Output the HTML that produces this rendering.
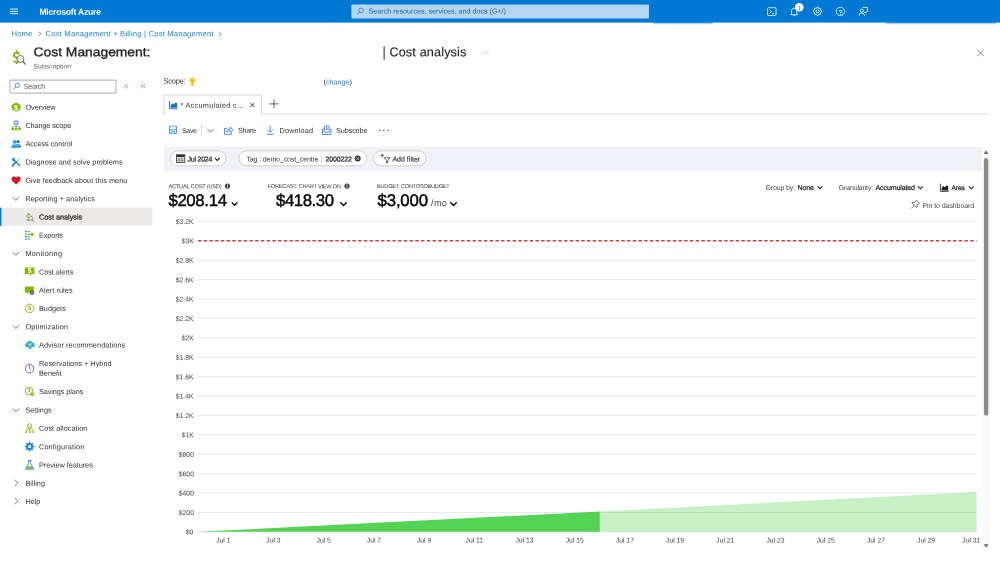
<!DOCTYPE html>
<html lang="en"><head><meta charset="utf-8"><title>Cost analysis - Microsoft Azure</title>
<style>
html,body{margin:0;padding:0;background:#fff;}
body{width:1000px;height:562px;position:relative;overflow:hidden;font-family:"Liberation Sans", sans-serif;}
.t{position:absolute;white-space:nowrap;line-height:1;margin:0;padding:0;}
svg{display:block;overflow:visible}
#app{position:absolute;left:0;top:0;width:1000px;height:562px;will-change:transform;}
</style></head><body><div id="app">
<svg style="position:absolute;left:0;top:0" width="1000" height="562" viewBox="0 0 1000 562">
<rect x="0.00" y="0.00" width="1000.00" height="22.60" fill="#0078d4"/>
</svg>
<div style="position:absolute;left:653px;top:16px;width:60px;height:7px;background:#0078d4;filter:blur(1.3px);"></div>
<div style="position:absolute;left:886px;top:16px;width:110px;height:7px;background:#0078d4;filter:blur(1.3px);"></div>
<svg style="position:absolute;left:0;top:0" width="1000" height="562" viewBox="0 0 1000 562">
<rect x="10.00" y="8.60" width="8.00" height="0.90" fill="#fff"/>
<rect x="10.00" y="10.90" width="8.00" height="0.90" fill="#fff"/>
<rect x="10.00" y="13.20" width="8.00" height="0.90" fill="#fff"/>
</svg>
<span class="t" id="t6" style="left:39px;top:7px;font-size:8.6px;color:#fff;transform:translate(0.40px,0.73px) rotate(0.03deg);font-weight:700;letter-spacing:-0.216px;">Microsoft Azure</span>
<svg style="position:absolute;left:0;top:0" width="1000" height="562" viewBox="0 0 1000 562">
<rect x="351.40" y="4.40" width="297.60" height="14.20" rx="1.0" fill="#b3d6f2"/>
<g transform="translate(356.20 7.40)"><circle cx="4.9" cy="3" r="2.3" fill="none" stroke="#3a6fa6" stroke-width="0.75"/><path d="M3.3 4.7L0.7 7.3" stroke="#3a6fa6" stroke-width="0.75" fill="none"/></g>
</svg>
<span class="t" id="t9" style="left:368px;top:7px;font-size:7.2px;color:#2a609a;transform:translate(0.60px,0.47px) rotate(0.03deg);letter-spacing:-0.025px;">Search resources, services, and docs (G+/)</span>
<svg style="position:absolute;left:0;top:0" width="1000" height="562" viewBox="0 0 1000 562">
<g transform="translate(767.00 6.80)"><rect x="0.6" y="0.9" width="8.4" height="7.8" rx="0.8" fill="none" stroke="#fff" stroke-width="0.8"/><path d="M2.5 3.2L4.6 4.9L2.5 6.6" fill="none" stroke="#fff" stroke-width="0.8"/><path d="M5 6.9H7.2" fill="none" stroke="#fff" stroke-width="0.8"/></g>
<g transform="translate(789.50 6.60)"><path d="M2 7.2V4.2a2.7 2.7 0 0 1 5.4 0V7.2l0.8 0.9H1.2Z" fill="none" stroke="#fff" stroke-width="0.8"/><path d="M3.8 8.4a1 1 0 0 0 1.9 0" fill="none" stroke="#fff" stroke-width="0.8"/></g>
<circle cx="799.3" cy="7.3" r="4.3" fill="#fff"/>
</svg>
<span class="t" id="t13" style="left:699px;width:200px;text-align:center;top:5px;font-size:5.6px;color:#5aa6e4;transform:translate(0.30px,0.95px) rotate(0.03deg);font-weight:700;">1</span>
<svg style="position:absolute;left:0;top:0" width="1000" height="562" viewBox="0 0 1000 562">
<g transform="translate(812.70 6.60)"><path d="M9.08,4.38L9.08,5.22L7.96,5.76L7.71,6.36L8.12,7.53L7.53,8.12L6.36,7.71L5.76,7.96L5.22,9.08L4.38,9.08L3.84,7.96L3.24,7.71L2.07,8.12L1.48,7.53L1.89,6.36L1.64,5.76L0.52,5.22L0.52,4.38L1.64,3.84L1.89,3.24L1.48,2.07L2.07,1.48L3.24,1.89L3.84,1.64L4.38,0.52L5.22,0.52L5.76,1.64L6.36,1.89L7.53,1.48L8.12,2.07L7.71,3.24L7.96,3.84Z" fill="none" stroke="#fff" stroke-width="0.8" stroke-linejoin="round"/><circle cx="4.8" cy="4.8" r="1.5" fill="none" stroke="#fff" stroke-width="0.8"/></g>
<g transform="translate(835.60 6.60)"><circle cx="4.8" cy="4.8" r="4.2" fill="none" stroke="#fff" stroke-width="0.8"/></g>
</svg>
<span class="t" id="t16" style="left:740px;width:200px;text-align:center;top:9px;font-size:6.6px;color:#fff;transform:translate(0.40px,0.46px) rotate(0.03deg);font-weight:700;">?</span>
<svg style="position:absolute;left:0;top:0" width="1000" height="562" viewBox="0 0 1000 562">
<g transform="translate(858.40 6.60)"><circle cx="3.4" cy="4.2" r="1.6" fill="none" stroke="#fff" stroke-width="0.8"/><path d="M0.6 9.2a2.8 2.8 0 0 1 5.6 0" fill="none" stroke="#fff" stroke-width="0.8"/><path d="M4.2 0.8H9v4.4H7.6L6.4 6.4V5.2" fill="none" stroke="#fff" stroke-width="0.8"/></g>
</svg>
<span class="t" id="t18" style="left:11px;top:30px;font-size:7.7px;color:#1a84d8;transform:translate(0.60px,0.20px) rotate(0.03deg);letter-spacing:0.093px;">Home</span>
<svg style="position:absolute;left:0;top:0" width="1000" height="562" viewBox="0 0 1000 562">
<g transform="translate(38.00 31.30)"><path d="M0.6 0.5L3 2.5L0.6 4.5" fill="none" stroke="#605e5c" stroke-width="0.7"/></g>
</svg>
<span class="t" id="t20" style="left:45px;top:30px;font-size:7.7px;color:#1a84d8;transform:translate(0.60px,0.20px) rotate(0.03deg);letter-spacing:0.162px;">Cost Management + Billing | Cost Management</span>
<svg style="position:absolute;left:0;top:0" width="1000" height="562" viewBox="0 0 1000 562">
<g transform="translate(218.40 31.30)"><path d="M0.6 0.5L3 2.5L0.6 4.5" fill="none" stroke="#605e5c" stroke-width="0.7"/></g>
</svg>
<span class="t" id="t22" style="left:33px;top:46px;font-size:12.7px;color:#252423;transform:translate(0.60px,0.25px) rotate(0.03deg) scaleX(1.0895);transform-origin:0 50%;-webkit-text-stroke:0.34px #252423;">Cost Management:</span>
<span class="t" id="t23" style="left:382px;top:44px;font-size:14.5px;color:#4a4644;transform:translate(0.30px,0.89px) rotate(0.03deg);">|</span>
<span class="t" id="t24" style="left:389px;top:46px;font-size:12.7px;color:#252423;transform:translate(0.40px,0.25px) rotate(0.03deg);letter-spacing:0.128px;-webkit-text-stroke:0.12px #252423;">Cost analysis</span>
<svg style="position:absolute;left:0;top:0" width="1000" height="562" viewBox="0 0 1000 562">
<ellipse cx="482.90" cy="52.80" rx="0.50" ry="0.50" fill="#8a8886"/>
<ellipse cx="485.40" cy="52.80" rx="0.50" ry="0.50" fill="#8a8886"/>
<ellipse cx="487.90" cy="52.80" rx="0.50" ry="0.50" fill="#8a8886"/>
</svg>
<span class="t" id="t28" style="left:33px;top:63px;font-size:6.7px;color:#605e5c;transform:translate(0.60px,0.44px) rotate(0.03deg);letter-spacing:0.053px;">Subscription</span>
<svg style="position:absolute;left:0;top:0" width="1000" height="562" viewBox="0 0 1000 562">
<g transform="translate(977.00 49.50)"><path d="M0.4 0.4L6.6 6.6M6.6 0.4L0.4 6.6" stroke="#605e5c" stroke-width="0.75" fill="none"/></g>
<rect x="9.77" y="80.08" width="106.15" height="13.05" rx="1.23" fill="#fff" stroke="#bdbbb9" stroke-width="1.15"/>
<g transform="translate(12.60 82.60)"><circle cx="4.7" cy="2.8" r="2.2" fill="none" stroke="#2b88d8" stroke-width="0.8"/><path d="M3.1 4.4L0.5 7" stroke="#2b88d8" stroke-width="0.8" fill="none"/></g>
</svg>
<span class="t" id="t32" style="left:23px;top:82px;font-size:7.25px;color:#605e5c;transform:translate(0.70px,0.69px) rotate(0.03deg);letter-spacing:-0.292px;">Search</span>
<svg style="position:absolute;left:0;top:0" width="1000" height="562" viewBox="0 0 1000 562">
<g transform="translate(124.20 84.00)"><circle cx="2" cy="2.6" r="1.5" fill="none" stroke="#8a8886" stroke-width="0.6"/><path d="M2 0.2V1.4" stroke="#8a8886" stroke-width="0.6"/></g>
<g transform="translate(140.60 83.80)"><path d="M2.2 0.3L0.5 2.3L2.2 4.3M4.5 0.3L2.8 2.3L4.5 4.3" fill="none" stroke="#605e5c" stroke-width="0.6"/></g>
<g transform="translate(10.80 49.70) scale(0.7100 0.7100)"><path d="M12.4 6.2C11.4 4.6 9.2 4 7.2 4.6C5.2 5.2 4.2 6.6 4.4 8.2C4.6 10 6.4 10.6 8.4 11.2C10.4 11.8 12 12.6 12 14.6C12 16.4 10.4 17.6 8.2 17.6C6.2 17.6 4.6 16.8 3.8 15.4" fill="none" stroke="#7fba00" stroke-width="2.6"/><path d="M8.2 0.6V3.6M8.2 17.4V20" stroke="#7fba00" stroke-width="2.4"/><circle cx="13.4" cy="13.1" r="5" fill="#f2f6ee" fill-opacity="0.78" stroke="#6a6a6a" stroke-width="1.3"/><path d="M17.2 16.9L20.4 20.4" stroke="#5a5a5a" stroke-width="1.7" stroke-linecap="round"/></g>
<rect x="0.00" y="207.70" width="152.20" height="18.10" fill="#edebe9"/>
<rect x="0.00" y="207.70" width="1.40" height="18.10" fill="#0078d4"/>
</svg>
<span class="t" id="t38" style="left:25px;top:103px;font-size:7.3px;color:#323130;transform:translate(0.40px,0.70px) rotate(0.03deg);letter-spacing:-0.032px;">Overview</span>
<svg style="position:absolute;left:0;top:0" width="1000" height="562" viewBox="0 0 1000 562">
<g transform="translate(11.10 102.10) scale(0.5000 0.5000)"><path d="M10 0.8L18.8 5.6V14.4L10 19.2L1.2 14.4V5.6Z" fill="#7fba00"/><text x="10" y="15.2" font-size="14.5" font-weight="700" text-anchor="middle" fill="#fff" font-family="Liberation Sans, sans-serif">$</text></g>
</svg>
<span class="t" id="t40" style="left:25px;top:121px;font-size:7.3px;color:#323130;transform:translate(0.40px,1.00px) rotate(0.03deg);letter-spacing:-0.106px;">Change scope</span>
<svg style="position:absolute;left:0;top:0" width="1000" height="562" viewBox="0 0 1000 562">
<g transform="translate(11.10 120.40) scale(0.5000 0.5000)"><rect x="6" y="1" width="8" height="7" rx="0.6" fill="#b9dcf7" stroke="#2b88d8" stroke-width="1.5"/><path d="M10 8.6V11.6M3.2 14.4V11.6H16.8V14.4M10 11.6V14.4" fill="none" stroke="#8a8886" stroke-width="1.2"/><rect x="0.6" y="14.2" width="5.2" height="5.4" rx="0.8" fill="#7fba00"/><rect x="7.4" y="14.2" width="5.2" height="5.4" rx="0.8" fill="#7fba00"/><rect x="14.2" y="14.2" width="5.2" height="5.4" rx="0.8" fill="#7fba00"/></g>
</svg>
<span class="t" id="t42" style="left:25px;top:140px;font-size:7.3px;color:#323130;transform:translate(0.40px,0.30px) rotate(0.03deg);letter-spacing:-0.035px;">Access control</span>
<svg style="position:absolute;left:0;top:0" width="1000" height="562" viewBox="0 0 1000 562">
<g transform="translate(11.10 138.70) scale(0.5000 0.5000)"><circle cx="13.8" cy="6" r="3.3" fill="#1a6fd0"/><path d="M8 17.4C8 12.8 10.4 10.4 13.8 10.4S19.8 12.8 19.8 17.4Z" fill="#1a6fd0"/><circle cx="7" cy="6.4" r="3.9" fill="#2ea3e6"/><path d="M0.2 18.6C0.2 13.6 3 11.2 7 11.2S13.8 13.6 13.8 18.6Z" fill="#2ea3e6"/><path d="M12.2 11.4L13.4 13L15 11.6L15.8 14L13.6 15.6Z" fill="#fff" fill-opacity="0.85"/></g>
</svg>
<span class="t" id="t44" style="left:25px;top:158px;font-size:7.3px;color:#323130;transform:translate(0.40px,0.60px) rotate(0.03deg);letter-spacing:0.041px;">Diagnose and solve problems</span>
<svg style="position:absolute;left:0;top:0" width="1000" height="562" viewBox="0 0 1000 562">
<g transform="translate(11.10 157.00) scale(0.5000 0.5000)"><path d="M17.4 2.2L9.6 10" stroke="#4fc0ee" stroke-width="1.7" stroke-linecap="round"/><path d="M9 10.6L3 17.2" stroke="#1a6fc4" stroke-width="3.2" stroke-linecap="round"/><path d="M6 6L17 17.2" stroke="#1a84d8" stroke-width="2.8" stroke-linecap="round"/><path d="M2 5.4A4 4 0 0 0 7.6 7.8L6.2 5L7.8 2.2A4 4 0 0 0 2 5.4Z" fill="#1a84d8"/><path d="M1.4 1.6L5 2.6L3.4 4.8Z" fill="#1a84d8"/></g>
</svg>
<span class="t" id="t46" style="left:25px;top:176px;font-size:7.3px;color:#323130;transform:translate(0.40px,0.90px) rotate(0.03deg);letter-spacing:0.050px;">Give feedback about this menu</span>
<svg style="position:absolute;left:0;top:0" width="1000" height="562" viewBox="0 0 1000 562">
<g transform="translate(11.10 175.30) scale(0.5000 0.5000)"><path d="M10 18.2C4 13.6 1 10.4 1 6.8C1 4 3 2.2 5.4 2.2C7.4 2.2 9 3.4 10 5C11 3.4 12.6 2.2 14.6 2.2C17 2.2 19 4 19 6.8C19 10.4 16 13.6 10 18.2Z" fill="#d9141c"/></g>
</svg>
<span class="t" id="t48" style="left:25px;top:195px;font-size:7.3px;color:#323130;transform:translate(0.40px,0.20px) rotate(0.03deg);letter-spacing:0.057px;">Reporting + analytics</span>
<svg style="position:absolute;left:0;top:0" width="1000" height="562" viewBox="0 0 1000 562">
<g transform="translate(12.40 196.70)"><path d="M0.4 0.5L3.5 3.7L6.6 0.5" fill="none" stroke="#484644" stroke-width="0.75"/></g>
</svg>
<span class="t" id="t50" style="left:39px;top:213px;font-size:7.3px;color:#201f1e;transform:translate(0.00px,0.50px) rotate(0.03deg);letter-spacing:-0.018px;-webkit-text-stroke:0.24px #201f1e;">Cost analysis</span>
<svg style="position:absolute;left:0;top:0" width="1000" height="562" viewBox="0 0 1000 562">
<g transform="translate(24.60 211.90) scale(0.5000 0.5000)"><g transform="translate(0.6 1.6) scale(0.86)"><path d="M12.4 6.2C11.4 4.6 9.2 4 7.2 4.6C5.2 5.2 4.2 6.6 4.4 8.2C4.6 10 6.4 10.6 8.4 11.2C10.4 11.8 12 12.6 12 14.6C12 16.4 10.4 17.6 8.2 17.6C6.2 17.6 4.6 16.8 3.8 15.4" fill="none" stroke="#7fba00" stroke-width="2.6"/><path d="M8.2 0.6V3.6M8.2 17.4V20" stroke="#7fba00" stroke-width="2.4"/><circle cx="13.4" cy="13.1" r="5" fill="#f2f6ee" fill-opacity="0.78" stroke="#6a6a6a" stroke-width="1.3"/><path d="M17.2 16.9L20.4 20.4" stroke="#5a5a5a" stroke-width="1.7" stroke-linecap="round"/></g></g>
</svg>
<span class="t" id="t52" style="left:39px;top:231px;font-size:7.3px;color:#323130;transform:translate(0.00px,0.80px) rotate(0.03deg);letter-spacing:-0.126px;">Exports</span>
<svg style="position:absolute;left:0;top:0" width="1000" height="562" viewBox="0 0 1000 562">
<g transform="translate(24.60 230.20) scale(0.5000 0.5000)"><rect x="0.8" y="1.4" width="3.6" height="2.4" fill="#1a8fdc"/><rect x="6.2" y="1.4" width="3.6" height="2.4" fill="#1a8fdc"/><rect x="0.8" y="6.6" width="3.6" height="2.4" fill="#1a8fdc"/><rect x="0.8" y="11.6" width="3.6" height="2.4" fill="#1a8fdc"/><rect x="6.2" y="11.6" width="3.6" height="2.4" fill="#1a8fdc"/><rect x="0.8" y="16.6" width="3.6" height="2.4" fill="#1a8fdc"/><rect x="6.2" y="16.6" width="3.6" height="2.4" fill="#1a8fdc"/><path d="M6 7.2H13.6V4.2L19.6 8.4L13.6 12.6V9.6H6Z" fill="#7fba00"/></g>
</svg>
<span class="t" id="t54" style="left:25px;top:250px;font-size:7.3px;color:#323130;transform:translate(0.40px,0.10px) rotate(0.03deg);letter-spacing:0.280px;">Monitoring</span>
<svg style="position:absolute;left:0;top:0" width="1000" height="562" viewBox="0 0 1000 562">
<g transform="translate(12.40 251.60)"><path d="M0.4 0.5L3.5 3.7L6.6 0.5" fill="none" stroke="#484644" stroke-width="0.75"/></g>
</svg>
<span class="t" id="t56" style="left:39px;top:268px;font-size:7.3px;color:#323130;transform:translate(0.00px,0.40px) rotate(0.03deg);letter-spacing:-0.048px;">Cost alerts</span>
<svg style="position:absolute;left:0;top:0" width="1000" height="562" viewBox="0 0 1000 562">
<g transform="translate(24.60 266.80) scale(0.5000 0.5000)"><path d="M0.6 1.4H19.4V14.6H13.4L11.6 18.2L9.4 14.6H0.6Z" fill="#7fba00"/><text x="10" y="13.2" font-size="13.5" font-weight="700" text-anchor="middle" fill="#fff" font-family="Liberation Sans, sans-serif">$</text></g>
</svg>
<span class="t" id="t58" style="left:39px;top:286px;font-size:7.3px;color:#323130;transform:translate(0.00px,0.70px) rotate(0.03deg);letter-spacing:0.074px;">Alert rules</span>
<svg style="position:absolute;left:0;top:0" width="1000" height="562" viewBox="0 0 1000 562">
<g transform="translate(24.60 285.10) scale(0.5000 0.5000)"><path d="M0.6 2.6H18.4V14.6H7.6L4.2 18.2L4.6 14.6H0.6Z" fill="#7fba00"/><circle cx="14.8" cy="15" r="4.4" fill="#4f4f4f"/><circle cx="14.8" cy="15" r="1.6" fill="#d8d8d8"/></g>
</svg>
<span class="t" id="t60" style="left:39px;top:304px;font-size:7.3px;color:#323130;transform:translate(0.00px,1.00px) rotate(0.03deg);letter-spacing:0.002px;">Budgets</span>
<svg style="position:absolute;left:0;top:0" width="1000" height="562" viewBox="0 0 1000 562">
<g transform="translate(24.60 303.40) scale(0.5000 0.5000)"><circle cx="10" cy="10" r="8.6" fill="#fff" stroke="#7fba00" stroke-width="1.6"/><path d="M10 1.4A8.6 8.6 0 0 0 1.6 12" fill="none" stroke="#f2952e" stroke-width="1.8" stroke-dasharray="2.6 1.6"/><text x="10" y="14.2" font-size="11.5" font-weight="700" text-anchor="middle" fill="#7fba00" font-family="Liberation Sans, sans-serif">$</text></g>
</svg>
<span class="t" id="t62" style="left:25px;top:323px;font-size:7.3px;color:#323130;transform:translate(0.40px,0.30px) rotate(0.03deg);letter-spacing:0.185px;">Optimization</span>
<svg style="position:absolute;left:0;top:0" width="1000" height="562" viewBox="0 0 1000 562">
<g transform="translate(12.40 324.80)"><path d="M0.4 0.5L3.5 3.7L6.6 0.5" fill="none" stroke="#484644" stroke-width="0.75"/></g>
</svg>
<span class="t" id="t64" style="left:39px;top:341px;font-size:7.3px;color:#323130;transform:translate(0.00px,0.60px) rotate(0.03deg);letter-spacing:0.083px;">Advisor recommendations</span>
<svg style="position:absolute;left:0;top:0" width="1000" height="562" viewBox="0 0 1000 562">
<g transform="translate(24.60 340.00) scale(0.5000 0.5000)"><path d="M5 14.4A4.4 4.4 0 0 1 4.4 5.8A6.2 6.2 0 0 1 16 5.2A4.6 4.6 0 0 1 15.6 14.4Z" fill="#2fb1ee"/><path d="M8 13.4H13.6V17.4L10.8 18.8L8 17.4Z" fill="#32c8c0"/><circle cx="11" cy="9" r="2.9" fill="#ffc61e"/><circle cx="11" cy="9" r="1.1" fill="#fff3c0"/></g>
</svg>
<span class="t" id="t66" style="left:39px;top:387px;font-size:7.3px;color:#323130;transform:translate(0.00px,0.90px) rotate(0.03deg);letter-spacing:-0.087px;">Savings plans</span>
<svg style="position:absolute;left:0;top:0" width="1000" height="562" viewBox="0 0 1000 562">
<g transform="translate(24.60 386.30) scale(0.5000 0.5000)"><circle cx="9.2" cy="9.6" r="7.8" fill="#f4f4f4" stroke="#7fba00" stroke-width="1.8"/><path d="M9.2 3.8V9.8L11.6 12.4" fill="none" stroke="#555" stroke-width="1.4"/><circle cx="15.4" cy="15.6" r="4.2" fill="#7fba00" stroke="#fff" stroke-width="0.8"/><rect x="14.2" y="14.4" width="2.4" height="2.4" fill="#dff0b0"/></g>
</svg>
<span class="t" id="t68" style="left:25px;top:406px;font-size:7.3px;color:#323130;transform:translate(0.40px,0.56px) rotate(0.03deg);letter-spacing:-0.026px;">Settings</span>
<svg style="position:absolute;left:0;top:0" width="1000" height="562" viewBox="0 0 1000 562">
<g transform="translate(12.40 408.06)"><path d="M0.4 0.5L3.5 3.7L6.6 0.5" fill="none" stroke="#484644" stroke-width="0.75"/></g>
</svg>
<span class="t" id="t70" style="left:39px;top:424px;font-size:7.3px;color:#323130;transform:translate(0.00px,0.86px) rotate(0.03deg);letter-spacing:0.037px;">Cost allocation</span>
<svg style="position:absolute;left:0;top:0" width="1000" height="562" viewBox="0 0 1000 562">
<g transform="translate(24.60 423.26) scale(0.5000 0.5000)"><circle cx="10" cy="5.6" r="4.6" fill="#f4fae8" stroke="#7fba00" stroke-width="1.7"/><path d="M10 3.4V6.4M10 7.4V8.2" stroke="#7fba00" stroke-width="1.1"/><path d="M3.2 13.8C4.4 11.4 6.6 10.6 10 10.6S15.6 11.4 16.8 13.8" fill="none" stroke="#7fba00" stroke-width="1.7"/><path d="M10 10.6V16M2.6 17.6V15H17.4V17.6" fill="none" stroke="#7fba00" stroke-width="1.3"/><circle cx="2.6" cy="17.8" r="1.7" fill="#7fba00"/><circle cx="10" cy="17.8" r="1.7" fill="#7fba00"/><circle cx="17.4" cy="17.8" r="1.7" fill="#7fba00"/></g>
</svg>
<span class="t" id="t72" style="left:39px;top:443px;font-size:7.3px;color:#323130;transform:translate(0.00px,0.16px) rotate(0.03deg);letter-spacing:0.149px;">Configuration</span>
<svg style="position:absolute;left:0;top:0" width="1000" height="562" viewBox="0 0 1000 562">
<g transform="translate(24.60 441.56) scale(0.5000 0.5000)"><path d="M19.16,9.10L19.16,10.90L16.12,11.86L15.64,13.02L17.11,15.84L15.84,17.11L13.02,15.64L11.86,16.12L10.90,19.16L9.10,19.16L8.14,16.12L6.98,15.64L4.16,17.11L2.89,15.84L4.36,13.02L3.88,11.86L0.84,10.90L0.84,9.10L3.88,8.14L4.36,6.98L2.89,4.16L4.16,2.89L6.98,4.36L8.14,3.88L9.10,0.84L10.90,0.84L11.86,3.88L13.02,4.36L15.84,2.89L17.11,4.16L15.64,6.98L16.12,8.14Z" fill="#1a7fdc" stroke="#1a7fdc" stroke-width="0.6" stroke-linejoin="round"/><circle cx="10" cy="10" r="3.1" fill="#fff"/></g>
</svg>
<span class="t" id="t74" style="left:39px;top:461px;font-size:7.3px;color:#323130;transform:translate(0.00px,0.46px) rotate(0.03deg);letter-spacing:-0.038px;">Preview features</span>
<svg style="position:absolute;left:0;top:0" width="1000" height="562" viewBox="0 0 1000 562">
<g transform="translate(24.60 459.87) scale(0.5000 0.5000)"><path d="M6.6 1.2H13.4M7.8 1.2V7.4L1.6 18.6H18.4L12.2 7.4V1.2" fill="#eaf4fc" stroke="#1a7fdc" stroke-width="1.6" stroke-linejoin="round"/><path d="M5.4 13.2H14.6L17.2 17.8H2.8Z" fill="#7fba00"/></g>
</svg>
<span class="t" id="t76" style="left:25px;top:479px;font-size:7.3px;color:#323130;transform:translate(0.40px,0.76px) rotate(0.03deg);letter-spacing:0.021px;">Billing</span>
<svg style="position:absolute;left:0;top:0" width="1000" height="562" viewBox="0 0 1000 562">
<g transform="translate(14.20 479.37)"><path d="M0.5 0.4L3.7 3.5L0.5 6.6" fill="none" stroke="#605e5c" stroke-width="0.75"/></g>
</svg>
<span class="t" id="t78" style="left:25px;top:498px;font-size:7.3px;color:#323130;transform:translate(0.40px,0.06px) rotate(0.03deg);letter-spacing:-0.006px;">Help</span>
<svg style="position:absolute;left:0;top:0" width="1000" height="562" viewBox="0 0 1000 562">
<g transform="translate(14.20 497.67)"><path d="M0.5 0.4L3.7 3.5L0.5 6.6" fill="none" stroke="#605e5c" stroke-width="0.75"/></g>
</svg>
<span class="t" id="t80" style="left:39px;top:359px;font-size:7.3px;color:#323130;transform:translate(0.00px,0.94px) rotate(0.03deg);letter-spacing:0.030px;">Reservations + Hybrid</span>
<span class="t" id="t81" style="left:39px;top:369px;font-size:7.3px;color:#323130;transform:translate(0.00px,0.74px) rotate(0.03deg);letter-spacing:-0.020px;">Benefit</span>
<svg style="position:absolute;left:0;top:0" width="1000" height="562" viewBox="0 0 1000 562">
<g transform="translate(24.60 363.64) scale(0.5000 0.5000)"><circle cx="10" cy="10.4" r="8.2" fill="#fff" stroke="#8f4fbf" stroke-width="1.9"/><path d="M10 4.6V10.6L12.8 13.4" fill="none" stroke="#555" stroke-width="1.5"/><path d="M7.6 0.8H12.4" stroke="#8f4fbf" stroke-width="1.4"/></g>
</svg>
<span class="t" id="t83" style="left:163px;top:77px;font-size:7.5px;color:#323130;transform:translate(0.60px,0.45px) rotate(0.03deg);letter-spacing:-0.273px;">Scope:</span>
<svg style="position:absolute;left:0;top:0" width="1000" height="562" viewBox="0 0 1000 562">
<g transform="translate(189.40 77.20)"><path d="M3 0.2L5.8 2.9L3 5.8L0.2 2.9Z" fill="#ffb900" stroke="#ffb900" stroke-width="0.9" stroke-linejoin="round"/><circle cx="3" cy="1.8" r="0.65" fill="#fff3cf"/><path d="M1.95 4.6H4.05V8.3L3 9.3L1.95 8.3Z" fill="#ffb400"/></g>
</svg>
<span class="t" id="t85" style="left:323px;top:78px;font-size:7.3px;color:#323130;transform:translate(0.60px,0.40px) rotate(0.03deg);letter-spacing:-0.062px;">(<span style="color:#1b7fd6">change</span>)</span>
<svg style="position:absolute;left:0;top:0" width="1000" height="562" viewBox="0 0 1000 562">
<rect x="163.60" y="113.65" width="826.40" height="0.90" fill="#e1dfdd"/>
<path d="M164.00 115.20V95.00H261.50V115.20" fill="#fff" stroke="#dad8d6" stroke-width="1.0"/>
<g transform="translate(169.00 100.60)"><path d="M0.5 0.4V8.2H8.8" fill="none" stroke="#1a6fc4" stroke-width="0.9"/><path d="M1.6 7.2V4.6L3.4 2.6L5 3.8L6.6 1.6L8.2 2.6V7.2Z" fill="#1a6fc4"/></g>
</svg>
<span class="t" id="t89" style="left:180px;top:101px;font-size:7.3px;color:#323130;transform:translate(0.40px,0.80px) rotate(0.03deg);letter-spacing:0.282px;">* Accumulated c...</span>
<svg style="position:absolute;left:0;top:0" width="1000" height="562" viewBox="0 0 1000 562">
<g transform="translate(250.10 102.70)"><path d="M0.3 0.3L4.3 4.3M4.3 0.3L0.3 4.3" stroke="#323130" stroke-width="0.9" fill="none"/></g>
<g transform="translate(269.40 99.40)"><path d="M4.6 0V9M0 4.5H9.2" stroke="#484644" stroke-width="0.85" fill="none"/></g>
<g transform="translate(169.00 125.80)"><path d="M0.5 0.5H7.5V7.7H0.5Z" fill="#e3effb" stroke="#4595e6" stroke-width="0.95"/><rect x="2" y="0.9" width="4" height="2.5" fill="#fff"/><path d="M0.9 3.9H7.1" stroke="#4595e6" stroke-width="0.8"/><rect x="1.9" y="5" width="4.2" height="2.6" fill="#5ea4ea"/><rect x="2.7" y="5.7" width="1" height="1.9" fill="#fff"/><rect x="4.3" y="5.7" width="1" height="1.9" fill="#fff"/></g>
</svg>
<span class="t" id="t93" style="left:182px;top:128px;font-size:6.96px;color:#323130;transform:translate(0.00px,0.11px) rotate(0.03deg);letter-spacing:-0.292px;">Save</span>
<svg style="position:absolute;left:0;top:0" width="1000" height="562" viewBox="0 0 1000 562">
<rect x="201.20" y="124.40" width="0.80" height="11.40" fill="#d2d0ce"/>
<g transform="translate(207.00 128.50)"><path d="M0.3 0.4L3.5 3.7L6.7 0.4" fill="none" stroke="#605e5c" stroke-width="0.85"/></g>
<g transform="translate(224.00 126.00)"><path d="M3.2 2.4H0.5V8.3H7.4V6.4" fill="none" stroke="#3688e0" stroke-width="0.9"/><path d="M2.6 6.2C2.8 4 4.4 3 6.2 3V1L9 3.8L6.2 6.4V4.6C4.8 4.6 3.6 5 2.6 6.2Z" fill="none" stroke="#3688e0" stroke-width="0.9"/></g>
</svg>
<span class="t" id="t97" style="left:238px;top:127px;font-size:7.18px;color:#323130;transform:translate(0.00px,0.87px) rotate(0.03deg);letter-spacing:-0.292px;">Share</span>
<svg style="position:absolute;left:0;top:0" width="1000" height="562" viewBox="0 0 1000 562">
<g transform="translate(266.40 125.80)"><path d="M3.7 0V6.4M1 3.9L3.7 6.5L6.4 3.9M0.2 8.6H7.2" fill="none" stroke="#3688e0" stroke-width="0.9"/></g>
</svg>
<span class="t" id="t99" style="left:279px;top:126px;font-size:7.3px;color:#323130;transform:translate(0.60px,0.90px) rotate(0.03deg);letter-spacing:0.135px;">Download</span>
<svg style="position:absolute;left:0;top:0" width="1000" height="562" viewBox="0 0 1000 562">
<g transform="translate(322.00 125.60)"><path d="M2.2 3.6H0.5V8.9H8.9V3.6H7.2" fill="none" stroke="#3688e0" stroke-width="0.9"/><path d="M0.5 5L3.2 6.6H6.2L8.9 5" fill="none" stroke="#3688e0" stroke-width="0.9"/><path d="M2.4 4.8V0.5H7V4.8" fill="none" stroke="#3688e0" stroke-width="0.9"/><path d="M4.7 1.4V4.2M3.6 3.2L4.7 4.3L5.8 3.2" fill="none" stroke="#3688e0" stroke-width="0.9"/></g>
</svg>
<span class="t" id="t101" style="left:336px;top:126px;font-size:7.3px;color:#323130;transform:translate(0.00px,0.90px) rotate(0.03deg);letter-spacing:-0.107px;">Subscribe</span>
<svg style="position:absolute;left:0;top:0" width="1000" height="562" viewBox="0 0 1000 562">
<ellipse cx="379.80" cy="130.40" rx="0.75" ry="0.75" fill="#484644"/>
<ellipse cx="383.90" cy="130.40" rx="0.75" ry="0.75" fill="#484644"/>
<ellipse cx="388.00" cy="130.40" rx="0.75" ry="0.75" fill="#484644"/>
<rect x="163.60" y="146.70" width="818.40" height="24.80" fill="#f0f2f8"/>
<rect x="170.45" y="150.75" width="55.70" height="15.10" rx="8.05" fill="#fff" stroke="#cbc9c7" stroke-width="0.9"/>
<g transform="translate(176.00 154.40)"><rect x="0.4" y="0.4" width="8.4" height="7.6" fill="#fff" stroke="#323130" stroke-width="0.8"/><rect x="0.4" y="0.4" width="8.4" height="2.2" fill="#323130"/><path d="M0.4 4.5H8.8M0.4 6.3H8.8M3.2 2.6V8M6 2.6V8" stroke="#323130" stroke-width="0.5"/></g>
</svg>
<span class="t" id="t108" style="left:187px;top:155px;font-size:7.0px;color:#201f1e;transform:translate(0.60px,0.51px) rotate(0.03deg);letter-spacing:-0.239px;-webkit-text-stroke:0.23px #201f1e;">Jul 2024</span>
<svg style="position:absolute;left:0;top:0" width="1000" height="562" viewBox="0 0 1000 562">
<g transform="translate(214.40 157.50)"><path d="M0.4 0.4L2.9 3L5.4 0.4" fill="none" stroke="#201f1e" stroke-width="1.15"/></g>
<rect x="238.85" y="150.75" width="127.90" height="15.10" rx="8.05" fill="#fff" stroke="#cbc9c7" stroke-width="0.9"/>
</svg>
<span class="t" id="t111" style="left:246px;top:155px;font-size:7.0px;color:#323130;transform:translate(0.40px,0.42px) rotate(0.03deg);letter-spacing:-0.114px;">Tag : demo_cost_centre :</span>
<span class="t" id="t112" style="left:325px;top:155px;font-size:7.0px;color:#201f1e;transform:translate(0.60px,0.61px) rotate(0.03deg);letter-spacing:-0.145px;-webkit-text-stroke:0.23px #201f1e;">2000222</span>
<svg style="position:absolute;left:0;top:0" width="1000" height="562" viewBox="0 0 1000 562">
<g transform="translate(354.60 155.50)"><circle cx="3.1" cy="3.1" r="3" fill="#3b3a39"/><path d="M1.9 1.9L4.3 4.3M4.3 1.9L1.9 4.3" stroke="#fff" stroke-width="0.7"/></g>
<rect x="373.45" y="150.75" width="52.70" height="15.10" rx="8.05" fill="#fff" stroke="#cbc9c7" stroke-width="0.9"/>
<g transform="translate(380.00 153.00)"><path d="M2.3 0.6V4.2M0.5 2.4H4.1" stroke="#323130" stroke-width="0.7"/><path d="M4.2 4.8H10.2L7.8 7.4V10H6.6V7.4Z" fill="none" stroke="#323130" stroke-width="0.75" stroke-linejoin="round"/></g>
</svg>
<span class="t" id="t116" style="left:392px;top:155px;font-size:7.0px;color:#323130;transform:translate(0.40px,0.42px) rotate(0.03deg);letter-spacing:0.019px;-webkit-text-stroke:0.15px #323130;">Add filter</span>
<span class="t" id="t117" style="left:168px;top:184px;font-size:5.7px;color:#3b3a39;transform:translate(0.40px,0.14px) rotate(0.03deg);letter-spacing:-0.228px;">ACTUAL COST (USD)</span>
<span class="t" id="t118" style="left:267px;top:184px;font-size:5.65px;color:#3b3a39;transform:translate(0.60px,0.12px) rotate(0.03deg);letter-spacing:-0.228px;">FORECAST: CHART VIEW ON</span>
<span class="t" id="t119" style="left:377px;top:184px;font-size:5.6px;color:#3b3a39;transform:translate(0.00px,0.10px) rotate(0.03deg);letter-spacing:-0.228px;">BUDGET: CONTOSOBUDGET</span>
<svg style="position:absolute;left:0;top:0" width="1000" height="562" viewBox="0 0 1000 562">
<g transform="translate(224.80 183.40)"><circle cx="2.7" cy="2.7" r="2.7" fill="#484644"/><rect x="2.3" y="2.3" width="0.8" height="2" fill="#fff"/><rect x="2.3" y="1.1" width="0.8" height="0.8" fill="#fff"/></g>
<g transform="translate(344.30 183.40)"><circle cx="2.7" cy="2.7" r="2.7" fill="#484644"/><rect x="2.3" y="2.3" width="0.8" height="2" fill="#fff"/><rect x="2.3" y="1.1" width="0.8" height="0.8" fill="#fff"/></g>
</svg>
<span class="t" id="t122" style="left:168px;top:192px;font-size:16.8px;color:#000;transform:translate(0.40px,0.91px) rotate(0.03deg);letter-spacing:-0.347px;-webkit-text-stroke:0.42px #000;">$208.14</span>
<span class="t" id="t123" style="left:276px;top:192px;font-size:16.8px;color:#000;transform:translate(0.00px,0.91px) rotate(0.03deg);letter-spacing:-0.447px;-webkit-text-stroke:0.42px #000;">$418.30</span>
<span class="t" id="t124" style="left:377px;top:192px;font-size:16.8px;color:#000;transform:translate(0.60px,0.91px) rotate(0.03deg);letter-spacing:-0.187px;-webkit-text-stroke:0.42px #000;">$3,000</span>
<span class="t" id="t125" style="left:431px;top:199px;font-size:9.2px;color:#484644;transform:translate(0.00px,0.09px) rotate(0.03deg);letter-spacing:0.334px;">/mo</span>
<svg style="position:absolute;left:0;top:0" width="1000" height="562" viewBox="0 0 1000 562">
<g transform="translate(231.30 201.92)"><path d="M0.5 0.5L3.299999999999997 3.3599999999999963L6.099999999999994 0.5" fill="none" stroke="#000" stroke-width="1.3"/></g>
<g transform="translate(339.80 201.68)"><path d="M0.5 0.5L3.6999999999999886 3.839999999999986L6.899999999999977 0.5" fill="none" stroke="#000" stroke-width="1.3"/></g>
<g transform="translate(449.80 201.68)"><path d="M0.5 0.5L3.6999999999999886 3.839999999999986L6.899999999999977 0.5" fill="none" stroke="#000" stroke-width="1.3"/></g>
</svg>
<span class="t" id="t129" style="left:765px;top:184px;font-size:7.0px;color:#484644;transform:translate(0.50px,0.02px) rotate(0.03deg);letter-spacing:-0.157px;">Group by:</span>
<span class="t" id="t130" style="left:797px;top:184px;font-size:7.0px;color:#201f1e;transform:translate(0.50px,0.02px) rotate(0.03deg);letter-spacing:-0.146px;-webkit-text-stroke:0.23px #201f1e;">None</span>
<svg style="position:absolute;left:0;top:0" width="1000" height="562" viewBox="0 0 1000 562">
<g transform="translate(817.30 185.90)"><path d="M0.3 0.4L2.7 2.9L5.1 0.4" fill="none" stroke="#201f1e" stroke-width="1.1"/></g>
</svg>
<span class="t" id="t132" style="left:838px;top:184px;font-size:7.0px;color:#484644;transform:translate(0.80px,0.02px) rotate(0.03deg);letter-spacing:-0.163px;">Granularity:</span>
<span class="t" id="t133" style="left:875px;top:184px;font-size:7.0px;color:#201f1e;transform:translate(0.50px,0.02px) rotate(0.03deg);letter-spacing:-0.097px;-webkit-text-stroke:0.23px #201f1e;">Accumulated</span>
<svg style="position:absolute;left:0;top:0" width="1000" height="562" viewBox="0 0 1000 562">
<g transform="translate(917.80 185.90)"><path d="M0.3 0.4L2.7 2.9L5.1 0.4" fill="none" stroke="#201f1e" stroke-width="1.1"/></g>
<g transform="translate(940.00 183.40)"><path d="M0.4 0.2V8H8.8" fill="none" stroke="#201f1e" stroke-width="0.8"/><path d="M1.6 7V4.4L3.4 2.6L5 3.8L6.6 1.8L8.2 2.8V7Z" fill="#201f1e"/></g>
</svg>
<span class="t" id="t136" style="left:951px;top:184px;font-size:6.63px;color:#201f1e;transform:translate(0.60px,0.92px) rotate(0.03deg);letter-spacing:-0.268px;-webkit-text-stroke:0.22px #201f1e;">Area</span>
<svg style="position:absolute;left:0;top:0" width="1000" height="562" viewBox="0 0 1000 562">
<g transform="translate(968.60 185.90)"><path d="M0.3 0.4L2.7 2.9L5.1 0.4" fill="none" stroke="#201f1e" stroke-width="1.1"/></g>
<g transform="translate(911.00 199.60)"><path d="M5.4 0.6L8.4 3.6L7.4 4.2L6 5.6L6.2 7.4L5.4 8L1 3.6L1.6 2.8L3.4 3L4.8 1.6Z" fill="none" stroke="#323130" stroke-width="0.7" stroke-linejoin="round"/><path d="M3 6L0.4 8.6" stroke="#323130" stroke-width="0.7"/></g>
</svg>
<span class="t" id="t139" style="left:922px;top:202px;font-size:7.0px;color:#484644;transform:translate(0.50px,0.02px) rotate(0.03deg);letter-spacing:-0.083px;">Pin to dashboard</span>
<svg style="position:absolute;left:0;top:0" width="1000" height="562" viewBox="0 0 1000 562">
<rect x="198" y="220.95" width="778.6" height="0.9" fill="#e6e6e6"/><rect x="198" y="259.75" width="778.6" height="0.9" fill="#e6e6e6"/><rect x="198" y="279.15" width="778.6" height="0.9" fill="#e6e6e6"/><rect x="198" y="298.55" width="778.6" height="0.9" fill="#e6e6e6"/><rect x="198" y="317.95" width="778.6" height="0.9" fill="#e6e6e6"/><rect x="198" y="337.35" width="778.6" height="0.9" fill="#e6e6e6"/><rect x="198" y="356.75" width="778.6" height="0.9" fill="#e6e6e6"/><rect x="198" y="376.15" width="778.6" height="0.9" fill="#e6e6e6"/><rect x="198" y="395.55" width="778.6" height="0.9" fill="#e6e6e6"/><rect x="198" y="414.95" width="778.6" height="0.9" fill="#e6e6e6"/><rect x="198" y="434.35" width="778.6" height="0.9" fill="#e6e6e6"/><rect x="198" y="453.75" width="778.6" height="0.9" fill="#e6e6e6"/><rect x="198" y="473.15" width="778.6" height="0.9" fill="#e6e6e6"/><rect x="198" y="492.55" width="778.6" height="0.9" fill="#e6e6e6"/><rect x="198" y="511.95" width="778.6" height="0.9" fill="#e6e6e6"/><rect x="198" y="531.35" width="778.6" height="0.9" fill="#e6e6e6"/><path d="M198 531.80L599.8 511.6V531.80Z" fill="#54d354"/><path d="M599.8 511.6L976.6 491.9V531.80H599.8Z" fill="#54d354" fill-opacity="0.32"/><path d="M198 240.80H976.6" stroke="#d63a40" stroke-width="1.45" stroke-dasharray="3.4 2.32" fill="none"/>
</svg>
<span class="t" id="t141" style="right:807px;text-align:right;top:218px;font-size:6.9px;color:#484848;transform:translate(0.70px,0.97px) rotate(0.03deg);">$3.2K</span>
<span class="t" id="t142" style="right:807px;text-align:right;top:238px;font-size:6.9px;color:#484848;transform:translate(0.70px,0.37px) rotate(0.03deg);">$3K</span>
<span class="t" id="t143" style="right:807px;text-align:right;top:257px;font-size:6.9px;color:#484848;transform:translate(0.70px,0.77px) rotate(0.03deg);">$2.8K</span>
<span class="t" id="t144" style="right:807px;text-align:right;top:277px;font-size:6.9px;color:#484848;transform:translate(0.70px,0.17px) rotate(0.03deg);">$2.6K</span>
<span class="t" id="t145" style="right:807px;text-align:right;top:296px;font-size:6.9px;color:#484848;transform:translate(0.70px,0.57px) rotate(0.03deg);">$2.4K</span>
<span class="t" id="t146" style="right:807px;text-align:right;top:315px;font-size:6.9px;color:#484848;transform:translate(0.70px,0.97px) rotate(0.03deg);">$2.2K</span>
<span class="t" id="t147" style="right:807px;text-align:right;top:335px;font-size:6.9px;color:#484848;transform:translate(0.70px,0.37px) rotate(0.03deg);">$2K</span>
<span class="t" id="t148" style="right:807px;text-align:right;top:354px;font-size:6.9px;color:#484848;transform:translate(0.70px,0.77px) rotate(0.03deg);">$1.8K</span>
<span class="t" id="t149" style="right:807px;text-align:right;top:374px;font-size:6.9px;color:#484848;transform:translate(0.70px,0.17px) rotate(0.03deg);">$1.6K</span>
<span class="t" id="t150" style="right:807px;text-align:right;top:393px;font-size:6.9px;color:#484848;transform:translate(0.70px,0.57px) rotate(0.03deg);">$1.4K</span>
<span class="t" id="t151" style="right:807px;text-align:right;top:412px;font-size:6.9px;color:#484848;transform:translate(0.70px,0.97px) rotate(0.03deg);">$1.2K</span>
<span class="t" id="t152" style="right:807px;text-align:right;top:432px;font-size:6.9px;color:#484848;transform:translate(0.70px,0.37px) rotate(0.03deg);">$1K</span>
<span class="t" id="t153" style="right:807px;text-align:right;top:451px;font-size:6.9px;color:#484848;transform:translate(0.70px,0.77px) rotate(0.03deg);">$800</span>
<span class="t" id="t154" style="right:807px;text-align:right;top:471px;font-size:6.9px;color:#484848;transform:translate(0.70px,0.17px) rotate(0.03deg);">$600</span>
<span class="t" id="t155" style="right:807px;text-align:right;top:490px;font-size:6.9px;color:#484848;transform:translate(0.70px,0.57px) rotate(0.03deg);">$400</span>
<span class="t" id="t156" style="right:807px;text-align:right;top:509px;font-size:6.9px;color:#484848;transform:translate(0.70px,0.97px) rotate(0.03deg);">$200</span>
<span class="t" id="t157" style="right:807px;text-align:right;top:529px;font-size:6.9px;color:#484848;transform:translate(0.70px,0.37px) rotate(0.03deg);">$0</span>
<span class="t" id="t158" style="left:123px;width:200px;text-align:center;top:537px;font-size:6.75px;color:#484848;transform:translate(0.30px,0.52px) rotate(0.03deg);">Jul 1</span>
<span class="t" id="t159" style="left:173px;width:200px;text-align:center;top:537px;font-size:6.75px;color:#484848;transform:translate(0.50px,0.52px) rotate(0.03deg);">Jul 3</span>
<span class="t" id="t160" style="left:223px;width:200px;text-align:center;top:537px;font-size:6.75px;color:#484848;transform:translate(0.70px,0.52px) rotate(0.03deg);">Jul 5</span>
<span class="t" id="t161" style="left:273px;width:200px;text-align:center;top:537px;font-size:6.75px;color:#484848;transform:translate(0.90px,0.52px) rotate(0.03deg);">Jul 7</span>
<span class="t" id="t162" style="left:324px;width:200px;text-align:center;top:537px;font-size:6.75px;color:#484848;transform:translate(0.10px,0.52px) rotate(0.03deg);">Jul 9</span>
<span class="t" id="t163" style="left:374px;width:200px;text-align:center;top:537px;font-size:6.75px;color:#484848;transform:translate(0.30px,0.52px) rotate(0.03deg);">Jul 11</span>
<span class="t" id="t164" style="left:424px;width:200px;text-align:center;top:537px;font-size:6.75px;color:#484848;transform:translate(0.50px,0.52px) rotate(0.03deg);">Jul 13</span>
<span class="t" id="t165" style="left:474px;width:200px;text-align:center;top:537px;font-size:6.75px;color:#484848;transform:translate(0.70px,0.52px) rotate(0.03deg);">Jul 15</span>
<span class="t" id="t166" style="left:524px;width:200px;text-align:center;top:537px;font-size:6.75px;color:#484848;transform:translate(0.90px,0.52px) rotate(0.03deg);">Jul 17</span>
<span class="t" id="t167" style="left:575px;width:200px;text-align:center;top:537px;font-size:6.75px;color:#484848;transform:translate(0.10px,0.52px) rotate(0.03deg);">Jul 19</span>
<span class="t" id="t168" style="left:625px;width:200px;text-align:center;top:537px;font-size:6.75px;color:#484848;transform:translate(0.30px,0.52px) rotate(0.03deg);">Jul 21</span>
<span class="t" id="t169" style="left:675px;width:200px;text-align:center;top:537px;font-size:6.75px;color:#484848;transform:translate(0.50px,0.52px) rotate(0.03deg);">Jul 23</span>
<span class="t" id="t170" style="left:725px;width:200px;text-align:center;top:537px;font-size:6.75px;color:#484848;transform:translate(0.70px,0.52px) rotate(0.03deg);">Jul 25</span>
<span class="t" id="t171" style="left:775px;width:200px;text-align:center;top:537px;font-size:6.75px;color:#484848;transform:translate(0.90px,0.52px) rotate(0.03deg);">Jul 27</span>
<span class="t" id="t172" style="left:826px;width:200px;text-align:center;top:537px;font-size:6.75px;color:#484848;transform:translate(0.10px,0.52px) rotate(0.03deg);">Jul 29</span>
<span class="t" id="t173" style="right:20px;text-align:right;top:537px;font-size:6.75px;color:#484848;transform:translate(0.30px,0.52px) rotate(0.03deg);">Jul 31</span>
<svg style="position:absolute;left:0;top:0" width="1000" height="562" viewBox="0 0 1000 562">
<rect x="982.40" y="146.60" width="7.20" height="402.40" fill="#fafafa"/>
<rect x="983.90" y="158.00" width="4.40" height="257.60" rx="2.2" fill="#8b8b8b"/>
<g transform="translate(983.60 150.60)"><path d="M0 3.4L2.5 0L5 3.4Z" fill="#6a6a6a"/></g>
<g transform="translate(983.60 544.20)"><path d="M0 0L2.5 3.4L5 0Z" fill="#6a6a6a"/></g>
</svg>
</div></body></html>
